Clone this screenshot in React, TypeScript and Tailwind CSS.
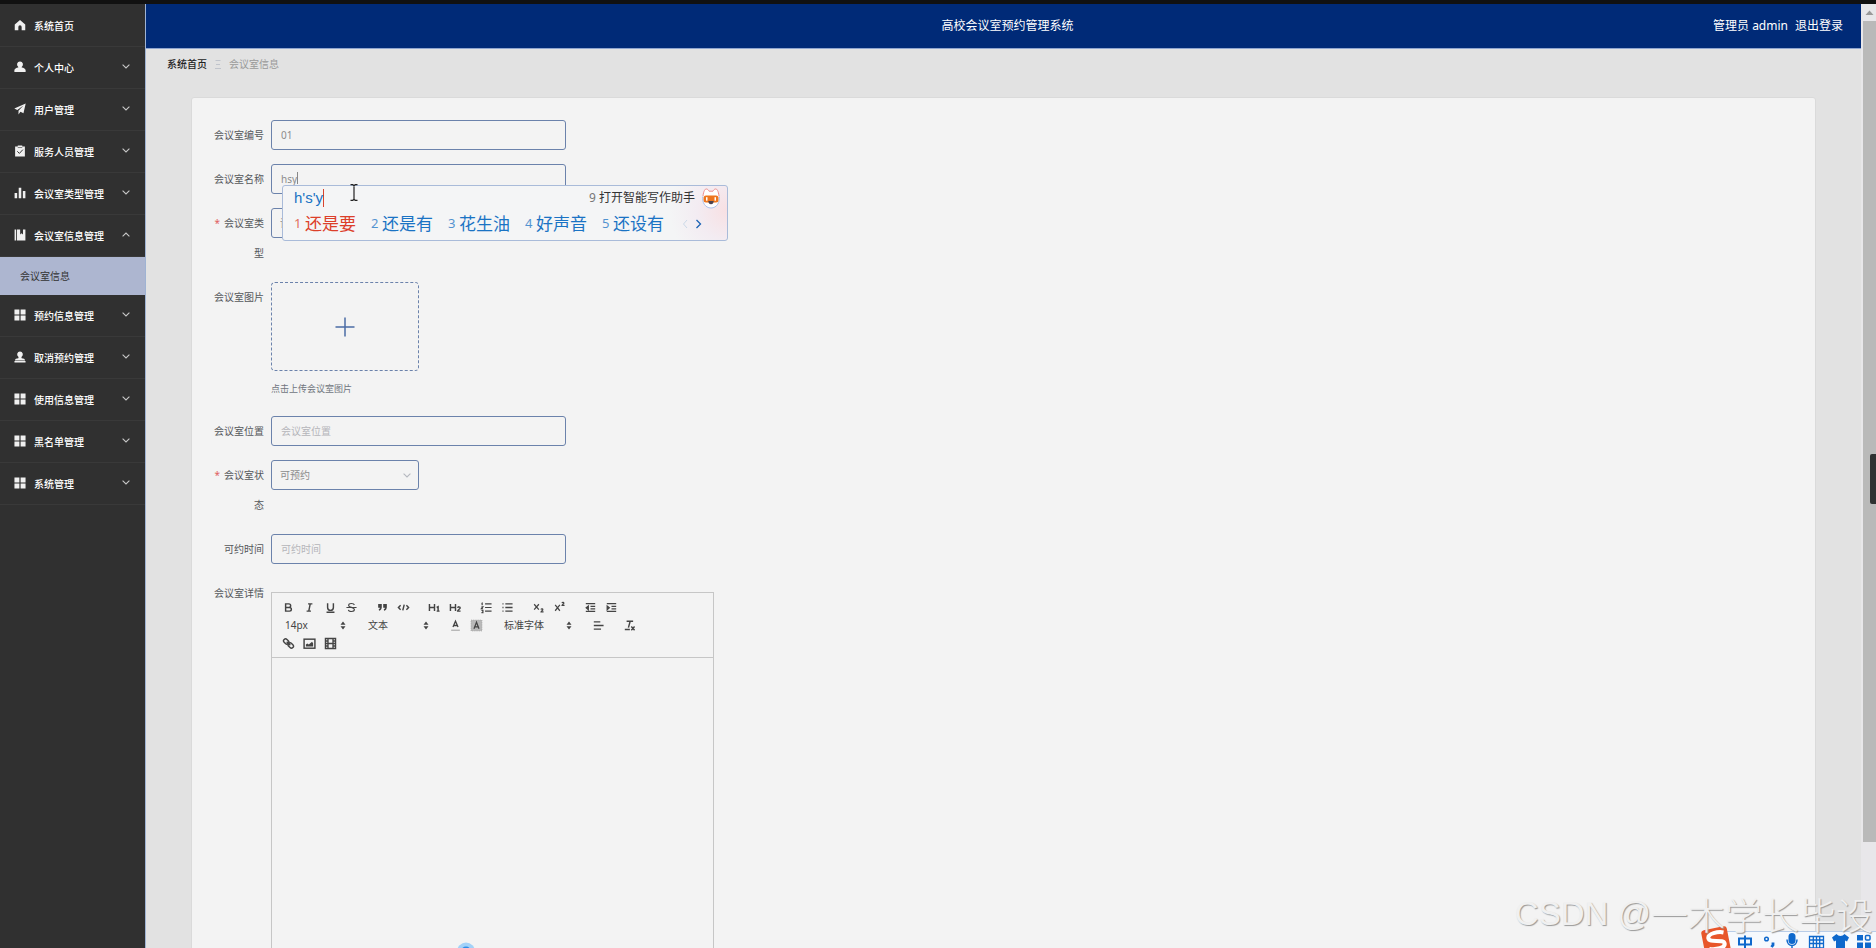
import { useState, type ReactNode } from 'react';

const FONT = "font-['Noto_Sans','Noto_Sans_CJK_SC',sans-serif]";

const icons: Record<string, ReactNode> = {
  home: <path d="M8 1.2 15 7.4V15H10.2V10.6A2.2 2.2 0 0 0 5.8 10.6V15H1V7.4Z" />,
  user: <path d="M8 .8a3.9 3.9 0 0 1 2.3 7.1v.9c2.8.3 5 1.7 5.2 3.6V14.6H.5v-2.2c.2-1.9 2.4-3.3 5.2-3.6v-.9A3.9 3.9 0 0 1 8 .8Z" />,
  plane: <path d="M15.6.6.4 7.2l4 2L12.6 3.4 6 10.2v5l2.6-3.6 4 2Z" />,
  clipboard: (
    <>
      <path d="M1.5 2H5V.6h6V2h3.5v13.4h-13Z" />
      <path d="m4.4 8.4 2.8 2.8 4.6-5" fill="none" stroke="#303030" strokeWidth="1.3" />
      <path d="M5 3.4h6" stroke="#303030" strokeWidth=".8" />
    </>
  ),
  bars: <path d="M.8 8h3.4v7H.8ZM6.3 1h3.4v14H6.3ZM11.8 5.4h3.4V15h-3.4Z" />,
  book: <path d="M.8.8h1.9v14.4H.8ZM3.8.8h4.4v6.6l1.9-1.6L12 7.4V.8h3.2v14.4H3.8Z" />,
  grid: <path d="M.6.6h6.6v6.6H.6ZM8.8.6h6.6v6.6H8.8ZM.6 8.8h6.6v6.6H.6ZM8.8 8.8h6.6v6.6H8.8Z" />,
  stamp: <path d="M8 .8a3.8 3.8 0 0 1 2.2 6.9c-.4.8-.3 1.6 0 2.1 2.6.2 4.4.9 4.6 2.8H1.2c.2-1.9 2-2.6 4.6-2.8.3-.5.4-1.3 0-2.1A3.8 3.8 0 0 1 8 .8ZM.6 13.4h14.8v1.8H.6Z" />,
};

const menu = [
  { icon: 'home', text: '系统首页', leaf: true },
  { icon: 'user', text: '个人中心' },
  { icon: 'plane', text: '用户管理' },
  { icon: 'clipboard', text: '服务人员管理' },
  { icon: 'bars', text: '会议室类型管理' },
  { icon: 'book', text: '会议室信息管理', children: ['会议室信息'] },
  { icon: 'grid', text: '预约信息管理' },
  { icon: 'stamp', text: '取消预约管理' },
  { icon: 'grid', text: '使用信息管理' },
  { icon: 'grid', text: '黑名单管理' },
  { icon: 'grid', text: '系统管理' },
];

function Chevron({ up, className }: { up?: boolean; className?: string }) {
  return (
    <svg viewBox="0 0 8 5" className={className} fill="none" stroke="currentColor" strokeWidth="1.1">
      <path d={up ? 'M.6 4.3 4 1l3.4 3.3' : 'M.6.7 4 4 7.4.7'} />
    </svg>
  );
}

function Sidebar() {
  return (
    <nav className="w-[146px] shrink-0 border-r border-[#9fb3d3] bg-[#303030] pt-px text-[10px] font-medium text-white">
      <ul>
        {menu.map((m) => (
          <li key={m.text}>
            <button className="flex h-[42px] w-full items-center border-b border-[#393939] pr-[15px] pl-[14px]">
              <svg viewBox="0 0 16 16" className="mb-px size-3 fill-[#f0f0f0]">{icons[m.icon]}</svg>
              <span className="ml-2 flex-1 pt-px text-left">{m.text}</span>
              {!m.leaf && <Chevron up={!!m.children} className="mb-[2px] h-[5px] w-2 text-[#c8c8c8]" />}
            </button>
            {m.children?.map((c) => (
              <a key={c} href="#" className="flex h-[38px] items-center bg-[#adb6d0] pl-5 font-normal text-[#333]">{c}</a>
            ))}
          </li>
        ))}
      </ul>
    </nav>
  );
}

function Row({ label, id, required, children }: { label: string; id: string; required?: boolean; children: ReactNode }) {
  return (
    <div className="mb-[14px] flex items-start">
      <label htmlFor={id} className="w-[60px] shrink-0 pr-[7px] text-right text-[10px] leading-[30px] text-[#55575b]">
        {required && <span className="mr-1 text-[#e06060]">*</span>}
        {label}
      </label>
      <div className="relative">{children}</div>
    </div>
  );
}

const inputCls =
  'block h-[30px] w-[295px] rounded-[3px] border border-[#6b82ab] bg-transparent px-[9px] text-[10px] text-[#8c8c8c] outline-none placeholder:text-[#b5b5ba]';

function Select({ id, value }: { id: string; value: string }) {
  return (
    <>
      <select id={id} className="block h-[30px] w-[148px] appearance-none rounded-[3px] border border-[#6b82ab] bg-transparent px-2 text-[10px] text-[#8c8c8c] outline-none">
        <option>{value}</option>
      </select>
      <Chevron className="pointer-events-none absolute top-[13px] right-2 h-[5px] w-2 text-[#b5b8bf]" />
    </>
  );
}

const candidates = ['还是要', '还是有', '花生油', '好声音', '还设有'];

/** Floating pinyin candidate window under the text caret. */
function ImePopup() {
  return (
    <div className="absolute top-[21px] left-[11px] z-10 h-[56px] w-[446px] rounded-[3px] border border-[#a9bbd9] bg-[#f4f5f6] bg-[radial-gradient(circle_at_100%_45%,#f8e0e3_0,#f3ecf2_30px,#f4f5f6_58px)] pt-px pr-[6px] pl-[11px]">
      <div className="flex h-[22px] items-center">
        <span className="border-r border-[#d8442f] font-['Liberation_Sans',sans-serif] text-[15px] leading-[18px] text-[#1a73c4]">h's'y</span>
        <span className="ml-auto text-[12px] text-[#777]">9</span>
        <span className="ml-[3px] text-[12px] text-[#333]">打开智能写作助手</span>
        <svg viewBox="0 0 20 21" className="ml-[6px] h-[21px] w-5">
          <path d="M2 8C2.600 3 4 .8 5.500 1 7 1.200 7.600 2.500 8 3.200h4c.4-.7 1-2 2.500-2.200C16 .8 17.400 3 18 8" fill="#fff" stroke="#ec8d8d" />
          <path d="M1.700 8.500C1 14 4 20 10 20s9-6 8.300-11.500" fill="#fdfdff" stroke="#a9c1ea" />
          <path d="M3 8.500C4 4.500 6 4 8 4h4c2 0 4 .5 5 4.500Z" fill="#fff" />
          <rect x="2.500" y="7.500" width="15" height="7" rx="2.500" fill="#ee761f" />
          <rect x="5" y="9.200" width="1.500" height="3.500" fill="#fff" />
          <rect x="13.500" y="9.200" width="1.500" height="3.500" fill="#fff" />
          <path d="M7.300 13h5.400c0 2-1.200 3.300-2.700 3.300S7.300 15 7.300 13Z" fill="#4b4350" />
        </svg>
      </div>
      <div className="flex h-[30px] items-center gap-[15px]">
        {candidates.map((c, i) => (
          <span key={c} className={i === 0 ? 'flex items-center text-[#dc3f2a]' : 'flex items-center text-[#1a73c4]'}>
            <span className="w-[11px] text-[13px] opacity-75">{i + 1}</span>
            <span className="text-[17px]">{c}</span>
          </span>
        ))}
        <svg viewBox="0 0 20 10" className="ml-[3px] h-[10px] w-5 fill-none">
          <path d="M5 1 1.500 5 5 9" stroke="#cbd9e8" />
          <path d="m14.500 1 4 4-4 4" stroke="#1a62b4" strokeWidth="1.300" />
        </svg>
      </div>
    </div>
  );
}

const ql: Record<string, ReactNode> = {
  加粗: <path d="M5 4h4.500a2.500 2.500 0 0 1 0 5H5ZM5 9h5.500a2.500 2.500 0 0 1 0 5H5Z" />,
  斜体: <path d="M7 4h6M5 14h6M8 14l2-10" />,
  下划线: <path d="M5 3v6a4 4 0 0 0 8 0V3M3.500 15.500h11" />,
  删除线: <path d="M2 9h14M13 5.500C12.500 4 11 3.500 9 3.500c-2.500 0-4 1-4 2.600 0 3.200 8 2.400 8 5.700 0 1.700-1.600 2.700-4 2.700s-4-.8-4.300-2.300" strokeWidth="1.600" />,
  引用: <path fill="currentColor" d="M4 5h3v3.500H4ZM11 5h3v3.500h-3ZM7 8c0 2.500-.8 4-3 4.500M14 8c0 2.500-.8 4-3 4.500" />,
  代码: <path d="M5 6 2 9l3 3M13 6l3 3-3 3M10 5 8 13" />,
  标题1: <path d="M2 4v10M9 4v10M2 9h7M12 9l2-1v6M12 14h4" />,
  标题2: <path d="M2 4v10M9 4v10M2 9h7M12 9.500c.3-2 3.600-1.800 3.500.2 0 1.300-3.500 2.400-3.500 4.300h4" />,
  有序列表: <path d="M7 4h9M7 9h9M7 14h9M2 3.500l1-.5v3M2 8h2l-2 2.500h2M2 13h2v3H2" strokeWidth="1.700" />,
  无序列表: <path d="M6 4h10M6 9h10M6 14h10M2 4h1.500M2 9h1.500M2 14h1.500" />,
  下标: <path d="M3 4.500 9.500 12M9.500 4.500 3 12M12.500 12c.3-1.500 2.500-1.300 2.500 0 0 1-2.500 1.800-2.500 3.200H16" strokeWidth="1.700" />,
  上标: <path d="M3 5.500 9.500 13.500M9.500 5.500 3 13.500M12.500 3c.3-1.500 2.500-1.300 2.500 0 0 1-2.500 1.800-2.500 3.200H16" strokeWidth="1.700" />,
  减少缩进: <path d="M2.500 3.500h13M9 7.500h6.500M9 11h6.500M2.500 14.500h13M6 7v5L3 9.500Z" fill="currentColor" strokeWidth="1.700" />,
  增加缩进: <path d="M2.500 3.500h13M9 7.500h6.500M9 11h6.500M2.500 14.500h13M3 7v5l3-2.500Z" fill="currentColor" strokeWidth="1.700" />,
  文字颜色: (
    <>
      <path d="M5.500 11 9 3l3.500 8M6.600 9h4.800" strokeWidth="1.800" />
      <path d="M3 15.500h12" stroke="#999" strokeWidth="1.300" />
    </>
  ),
  背景颜色: (
    <>
      <path d="M1.500 1.500h15v15h-15Z" fill="#b9b9b9" stroke="#999" strokeWidth="1" strokeDasharray="1.500 1.500" />
      <path d="M5.500 13.500 9 4.500l3.500 9M6.600 11h4.800" strokeWidth="1.700" />
    </>
  ),
  对齐: <path d="M2.500 4h9M2.500 9h13.500M2.500 14h10" />,
  清除格式: <path d="M5 3h9M10 3 7.500 12M2.500 14.500h7M11.500 10.500l4.500 5M16 10.500l-4.500 5" />,
  链接: (
    <>
      <rect x="2" y="3.500" width="8" height="5.500" rx="2.700" transform="rotate(45 6 6)" />
      <rect x="8" y="9" width="8" height="5.500" rx="2.700" transform="rotate(45 12 12)" />
      <path d="m6.500 6.500 5 5" />
    </>
  ),
  图片: (
    <>
      <rect x="1.500" y="3" width="15" height="12.500" />
      <path fill="currentColor" stroke="none" d="M4 13V10.500l2-1.500 2 1.500 4.500-4 1.500 2V13Z" />
    </>
  ),
  视频: <path d="M2 2h14v14H2ZM5.500 2v14M12.500 2v14M5.500 9h7M2 5.500h3M2 9h3M2 12.500h3M13 5.500h3M13 9h3M13 12.500h3" strokeWidth="1.900" />,
};

function Tools({ names }: { names: string[] }) {
  return (
    <span className="mr-[10px] flex">
      {names.map((n) => (
        <button key={n} type="button" aria-label={n} className="flex h-[18px] w-[21px] items-center justify-center text-[#444]">
          <svg viewBox="0 0 18 18" className="size-[13px]" fill="none" stroke="currentColor" strokeWidth="2">{ql[n]}</svg>
        </button>
      ))}
    </span>
  );
}

function Picker({ label, value, className }: { label: string; value: string; className: string }) {
  return (
    <span className={`relative flex h-[18px] items-center ${className}`}>
      <select aria-label={label} className="w-full appearance-none bg-transparent pl-[7px] text-[10px] leading-[18px] text-[#444] outline-none">
        <option>{value}</option>
      </select>
      <svg viewBox="0 0 6 9" className="pointer-events-none absolute right-[5px] h-[9px] w-[6px] fill-[#444]">
        <path d="M.5 3.700 3 .5l2.500 3.200ZM.5 5.300 3 8.500l2.500-3.200Z" />
      </svg>
    </span>
  );
}

function Editor() {
  return (
    <div className="mt-[14px] w-[443px] border border-[#c6c6c6]">
      <div className="border-b border-[#c6c6c6] px-[6px] py-[5px]">
        <div className="flex">
          <Tools names={['加粗', '斜体', '下划线', '删除线']} />
          <Tools names={['引用', '代码']} />
          <Tools names={['标题1', '标题2']} />
          <Tools names={['有序列表', '无序列表']} />
          <Tools names={['下标', '上标']} />
          <Tools names={['减少缩进', '增加缩进']} />
        </div>
        <div className="flex">
          <Picker label="字号" value="14px" className="mr-[10px] w-[73px]" />
          <Picker label="标题" value="文本" className="mr-[11px] w-[73px]" />
          <Tools names={['文字颜色', '背景颜色']} />
          <Picker label="字体" value="标准字体" className="mr-[11px] w-[80px]" />
          <Tools names={['对齐']} />
          <Tools names={['清除格式']} />
        </div>
        <div className="flex">
          <Tools names={['链接', '图片', '视频']} />
        </div>
      </div>
      <textarea id="detail" className="block h-[400px] w-full resize-none p-3 text-[10px] outline-none" />
    </div>
  );
}

function RoomForm() {
  const [f, setF] = useState({ code: '01', name: 'hsy', place: '', time: '' });
  const set = (patch: Partial<typeof f>) => setF((s) => ({ ...s, ...patch }));
  return (
    <form className="mx-[45px] min-h-[1000px] rounded-[3px] border border-[#dadada] bg-[#f3f3f3] px-[19px] pt-[22px]">
      <Row label="会议室编号" id="code">
        <input id="code" className={inputCls} value={f.code} onChange={(e) => set({ code: e.target.value })} />
      </Row>
      <Row label="会议室名称" id="name">
        <input id="name" className={inputCls} value={f.name} onChange={(e) => set({ name: e.target.value })} />
        <span className="absolute top-2 left-[26px] h-3 w-px bg-[#888]" />
        <ImePopup />
        <svg viewBox="0 0 8 17" className="absolute top-[20px] left-[79px] z-20 h-[17px] w-2 fill-none stroke-[#222]">
          <path d="M.5.7h2.300L4 1.700 5.200.7h2.300M4 1.700v13.600M.5 16.300h2.300L4 15.300l1.200 1h2.300" strokeWidth="1.200" />
        </svg>
      </Row>
      <Row label="会议室类型" id="type" required>
        <Select id="type" value="请选择会议室类型" />
      </Row>
      <Row label="会议室图片" id="photo">
        <button id="photo" type="button" aria-label="上传" className="flex h-[89px] w-[148px] items-center justify-center rounded-[4px] border border-dashed border-[#6b82ab]">
          <svg viewBox="0 0 20 20" className="size-5" stroke="#4b6ca5" strokeWidth="1.500">
            <path d="M10 .5v19M.5 10h19" />
          </svg>
        </button>
        <p className="h-[31px] pt-[10px] text-[9px] leading-[16px] text-[#70757d]">点击上传会议室图片</p>
      </Row>
      <Row label="会议室位置" id="place">
        <input id="place" className={inputCls} placeholder="会议室位置" value={f.place} onChange={(e) => set({ place: e.target.value })} />
      </Row>
      <Row label="会议室状态" id="status" required>
        <Select id="status" value="可预约" />
      </Row>
      <Row label="可约时间" id="time">
        <input id="time" className={inputCls} placeholder="可约时间" value={f.time} onChange={(e) => set({ time: e.target.value })} />
      </Row>
      <Row label="会议室详情" id="detail">
        <Editor />
      </Row>
    </form>
  );
}

/** Input method status bar docked in the corner. */
function ImeBar() {
  return (
    <div className="absolute right-0 bottom-0 h-[17px] w-[172px] border-t border-[#b9cde8] bg-[#f6f9fd]">
      <svg viewBox="0 0 172 21" className="absolute bottom-0 left-0 h-[21px] w-[172px] overflow-visible" fill="none" stroke="#0e68cc">
        <g transform="rotate(-11 12 14)">
          <rect x="-1" y="1" width="26" height="26" rx="3" fill="#e8562a" stroke="none" />
          <path d="M21 7C16 5 5 5 5 10s15 3 15 8-10 4.500-16 2.500" stroke="#fff" strokeWidth="4" />
        </g>
        <path d="M35 11.500h12v6H35ZM41 8.500V21" strokeWidth="2" />
        <circle cx="62.500" cy="12" r="1.800" strokeWidth="1.500" />
        <path d="M69 15.500v2.500l-1.500 2" strokeWidth="2.800" />
        <rect x="84.500" y="6" width="7" height="11" rx="3.500" fill="#0e68cc" stroke="none" />
        <path d="M83 12.500c0 8 10 8 10 0M88 18v3" strokeWidth="1.500" />
        <path d="M105.500 9.500h14V21h-14ZM106 13h13M106 16.500h13M109.300 9.500V21M112.500 9.500V21M115.700 9.500V21" strokeWidth="1.300" />
        <path d="m132.500 7-4.500 3.500 2 4 2-1v8h9v-8l2 1 2-4-4.500-3.500c-2 2.500-6 2.500-8 0Z" fill="#0e68cc" stroke="none" />
        <path d="M153 8h6v5.500h-6ZM153 15.500h6V22h-6ZM161 15.500h6V22h-6Z" fill="#0e68cc" stroke="none" />
        <rect x="161.500" y="8.500" width="4.500" height="4.500" rx="1" strokeWidth="1.500" />
      </svg>
    </div>
  );
}

export default function App() {
  return (
    <div className={`relative flex h-screen flex-col overflow-hidden bg-[#e2e2e2] ${FONT}`}>
      <div className="h-1 shrink-0 bg-[#111]" />
      <div className="flex min-h-0 flex-1">
        <Sidebar />
        <div className="min-w-0 flex-1 overflow-hidden">
          <header className="grid h-[45px] grid-cols-[1fr_auto_1fr] items-center border-b border-[#8fa5cf] bg-[#002a77] pr-[18px] pl-[26px] text-[12px] text-white">
            <h1 className="col-start-2">高校会议室预约管理系统</h1>
            <div className="flex justify-end gap-[7px]">
              <span>管理员 admin</span>
              <a href="#">退出登录</a>
            </div>
          </header>
          <div className="flex h-[48px] items-start pt-[7px] pl-[21px] text-[10px] leading-4">
            <a href="#" className="font-medium text-[#222]">系统首页</a>
            <svg viewBox="0 0 6 9" className="mx-[8px] mt-1 h-[9px] w-[6px] stroke-[#c0c4cc]">
              <path d="M.5.500h5M1 4.500h4M0 8.500h6" />
            </svg>
            <span className="text-[#999]">会议室信息</span>
          </div>
          <RoomForm />
        </div>
        <div className="flex w-[15px] shrink-0 flex-col bg-[#e8e7ea] pl-[2px]">
          <svg viewBox="0 0 13 17" className="h-[17px] w-[13px] shrink-0 fill-[#999]">
            <path d="M6.500 6.500 10.500 11h-8Z" />
          </svg>
          <div className="h-[87%] bg-[#b9b9b9]" />
        </div>
      </div>
      <div className="absolute top-[454px] right-0 h-[50px] w-[6px] rounded-l-[2px] bg-[#303232]" />
      <svg viewBox="0 0 18 6" className="absolute bottom-0 left-[457px] h-[6px] w-[18px]">
        <circle cx="9" cy="9.500" r="9" fill="#a3d2f8" />
        <circle cx="9" cy="9.500" r="5" fill="#2d8ce8" />
      </svg>
      <ImeBar />
      <div className="absolute right-[3px] bottom-[7px] flex items-center whitespace-pre leading-[54px] text-[#f0f0f0] [text-shadow:1px_1px_1px_#999]">
        <span className="font-['Liberation_Sans',sans-serif] text-[33px]">CSDN @</span>
        <span className="font-['Noto_Sans_CJK_SC',sans-serif] text-[37px] font-light">一木学长毕设</span>
      </div>
    </div>
  );
}
